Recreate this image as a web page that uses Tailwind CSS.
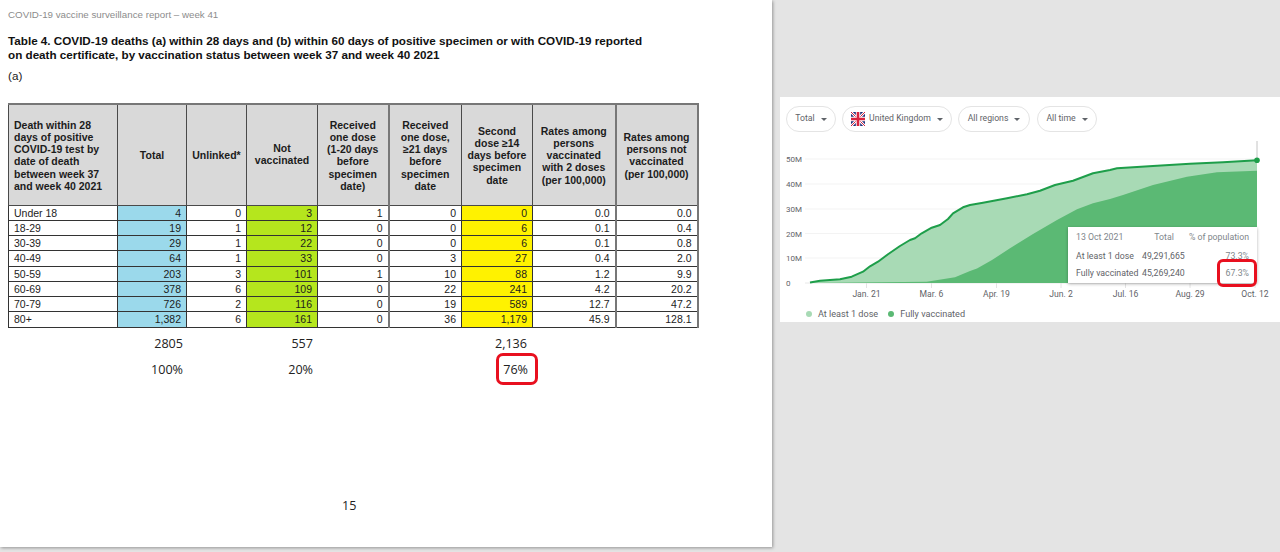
<!DOCTYPE html>
<html lang="en">
  <head>
    <meta charset="UTF-8" />
    <title>COVID-19 vaccine surveillance</title>
    <script src="https://cdn.jsdelivr.net/npm/@tailwindcss/browser@4"></script>
  </head>
  <body class="bg-[#e4e4e4] h-[552px] w-[1280px] overflow-hidden font-['Liberation_Sans',sans-serif]">
    <div class="flex items-start">
      <!-- report page -->
      <div class="w-[772px] h-[547px] shrink-0 bg-white shadow-[1px_1px_3px_rgba(0,0,0,0.35)] pl-[8px] relative">
        <div class="pt-[9px] text-[9.75px] leading-[12px] text-[#8c8c8c]">COVID-19 vaccine surveillance report – week 41</div>
        <div class="mt-[13px] text-[11.68px] leading-[14px] font-bold text-[#111] w-[720px]">
          Table 4. COVID-19 deaths (a) within 28 days and (b) within 60 days of positive specimen or with COVID-19 reported<br />on death certificate, by vaccination status between week 37 and week 40 2021
        </div>
        <div class="mt-[7px] text-[11.7px] leading-[14px] text-[#222]">(a)</div>

        <table class="mt-[20px] table-fixed border-collapse w-[689px] text-[10.5px] text-[#1c1c1c]">
          <colgroup>
            <col class="w-[109px]" /><col class="w-[69px]" /><col class="w-[60px]" /><col class="w-[71px]" /><col class="w-[71px] border-r-2 border-[#777]" /><col class="w-[73px]" /><col class="w-[71px]" /><col class="w-[83px] border-r-2 border-[#777]" /><col class="w-[82px] border-r-2 border-[#777]" />
          </colgroup>
          <thead>
            <tr class="h-[101px] bg-[#d9d9d9] font-bold leading-[12.25px] text-center border-t-2 border-[#777]">
              <th class="border border-[#4a4a4a] pl-[5px] pr-[4px] pt-[1px] text-left font-bold">Death within 28 days of positive COVID-19 test by date of death between week 37 and week 40 2021</th>
              <th class="border border-[#4a4a4a] font-bold">Total</th>
              <th class="border border-[#4a4a4a] font-bold">Unlinked*</th>
              <th class="border border-[#4a4a4a] px-[4px] pb-[2px] font-bold">Not vaccinated</th>
              <th class="border border-[#4a4a4a] px-[5px] pt-[1px] font-bold">Received one dose (1-20 days before specimen date)</th>
              <th class="border border-[#4a4a4a] px-[5px] pt-[1px] font-bold">Received one dose, ≥21 days before specimen date</th>
              <th class="border border-[#4a4a4a] px-[4px] pt-[1px] font-bold">Second dose ≥14 days before specimen date</th>
              <th class="border border-[#4a4a4a] px-[4px] pt-[1px] font-bold">Rates among persons vaccinated with 2 doses (per 100,000)</th>
              <th class="border border-[#4a4a4a] px-[4px] pt-[1px] font-bold">Rates among persons not vaccinated (per 100,000)</th>
            </tr>
          </thead>
          <tbody class="text-right leading-[14px]">
            <tr class="h-[15.25px]">
              <td class="border border-[#333] pl-[5px] text-left">Under 18</td><td class="border border-[#333] pr-[5px] bg-[#9bd9eb]">4</td><td class="border border-[#333] pr-[5px]">0</td><td class="border border-[#333] pr-[5px] bg-[#b5e61d]">3</td><td class="border border-[#333] pr-[5px]">1</td><td class="border border-[#333] pr-[5px]">0</td><td class="border border-[#333] pr-[5px] bg-[#fff200]">0</td><td class="border border-[#333] pr-[5px]">0.0</td><td class="border border-[#333] pr-[5px]">0.0</td>
            </tr>
            <tr class="h-[15.25px]">
              <td class="border border-[#333] pl-[5px] text-left">18-29</td><td class="border border-[#333] pr-[5px] bg-[#9bd9eb]">19</td><td class="border border-[#333] pr-[5px]">1</td><td class="border border-[#333] pr-[5px] bg-[#b5e61d]">12</td><td class="border border-[#333] pr-[5px]">0</td><td class="border border-[#333] pr-[5px]">0</td><td class="border border-[#333] pr-[5px] bg-[#fff200]">6</td><td class="border border-[#333] pr-[5px]">0.1</td><td class="border border-[#333] pr-[5px]">0.4</td>
            </tr>
            <tr class="h-[15.25px]">
              <td class="border border-[#333] pl-[5px] text-left">30-39</td><td class="border border-[#333] pr-[5px] bg-[#9bd9eb]">29</td><td class="border border-[#333] pr-[5px]">1</td><td class="border border-[#333] pr-[5px] bg-[#b5e61d]">22</td><td class="border border-[#333] pr-[5px]">0</td><td class="border border-[#333] pr-[5px]">0</td><td class="border border-[#333] pr-[5px] bg-[#fff200]">6</td><td class="border border-[#333] pr-[5px]">0.1</td><td class="border border-[#333] pr-[5px]">0.8</td>
            </tr>
            <tr class="h-[15.25px]">
              <td class="border border-[#333] pl-[5px] text-left">40-49</td><td class="border border-[#333] pr-[5px] bg-[#9bd9eb]">64</td><td class="border border-[#333] pr-[5px]">1</td><td class="border border-[#333] pr-[5px] bg-[#b5e61d]">33</td><td class="border border-[#333] pr-[5px]">0</td><td class="border border-[#333] pr-[5px]">3</td><td class="border border-[#333] pr-[5px] bg-[#fff200]">27</td><td class="border border-[#333] pr-[5px]">0.4</td><td class="border border-[#333] pr-[5px]">2.0</td>
            </tr>
            <tr class="h-[15.25px]">
              <td class="border border-[#333] pl-[5px] text-left">50-59</td><td class="border border-[#333] pr-[5px] bg-[#9bd9eb]">203</td><td class="border border-[#333] pr-[5px]">3</td><td class="border border-[#333] pr-[5px] bg-[#b5e61d]">101</td><td class="border border-[#333] pr-[5px]">1</td><td class="border border-[#333] pr-[5px]">10</td><td class="border border-[#333] pr-[5px] bg-[#fff200]">88</td><td class="border border-[#333] pr-[5px]">1.2</td><td class="border border-[#333] pr-[5px]">9.9</td>
            </tr>
            <tr class="h-[15.25px]">
              <td class="border border-[#333] pl-[5px] text-left">60-69</td><td class="border border-[#333] pr-[5px] bg-[#9bd9eb]">378</td><td class="border border-[#333] pr-[5px]">6</td><td class="border border-[#333] pr-[5px] bg-[#b5e61d]">109</td><td class="border border-[#333] pr-[5px]">0</td><td class="border border-[#333] pr-[5px]">22</td><td class="border border-[#333] pr-[5px] bg-[#fff200]">241</td><td class="border border-[#333] pr-[5px]">4.2</td><td class="border border-[#333] pr-[5px]">20.2</td>
            </tr>
            <tr class="h-[15.25px]">
              <td class="border border-[#333] pl-[5px] text-left">70-79</td><td class="border border-[#333] pr-[5px] bg-[#9bd9eb]">726</td><td class="border border-[#333] pr-[5px]">2</td><td class="border border-[#333] pr-[5px] bg-[#b5e61d]">116</td><td class="border border-[#333] pr-[5px]">0</td><td class="border border-[#333] pr-[5px]">19</td><td class="border border-[#333] pr-[5px] bg-[#fff200]">589</td><td class="border border-[#333] pr-[5px]">12.7</td><td class="border border-[#333] pr-[5px]">47.2</td>
            </tr>
            <tr class="h-[15.25px]">
              <td class="border border-[#333] pl-[5px] text-left">80+</td><td class="border border-[#333] pr-[5px] bg-[#9bd9eb]">1,382</td><td class="border border-[#333] pr-[5px]">6</td><td class="border border-[#333] pr-[5px] bg-[#b5e61d]">161</td><td class="border border-[#333] pr-[5px]">0</td><td class="border border-[#333] pr-[5px]">36</td><td class="border border-[#333] pr-[5px] bg-[#fff200]">1,179</td><td class="border border-[#333] pr-[5px]">45.9</td><td class="border border-[#333] pr-[5px]">128.1</td>
            </tr>
          </tbody>
        </table>

        <!-- hand-added totals, same column edges as the table -->
        <div class="mt-[7px] grid grid-cols-[109px_69px_60px_71px_71px_73px_71px] text-[12.6px] leading-[18px] text-[#222] font-['Open_Sans',sans-serif] text-right">
          <div></div><div class="pr-[3px]">2805</div><div></div><div class="pr-[4px]">557</div><div></div><div></div><div class="pr-[5px]">2,136</div>
        </div>
        <div class="mt-[8px] grid grid-cols-[109px_69px_60px_71px_71px_73px_71px] text-[12.6px] leading-[18px] text-[#222] font-['Open_Sans',sans-serif] text-right">
          <div></div><div class="pr-[3px]">100%</div><div></div><div class="pr-[4px]">20%</div><div></div><div></div><div class="pr-[4px]">76%</div>
        </div>
        <div class="absolute left-[496px] top-[353px] w-[42px] h-[32px] border-[3px] border-[#e8101f] rounded-[7px]"></div>

        <div class="absolute left-[342px] top-[498px] text-[12.6px] leading-[16px] text-[#222] font-['Open_Sans',sans-serif]">15</div>
      </div>

      <!-- vaccination chart, pasted in -->
      <div class="ml-[8px] mt-[97px] w-[500px] h-[225px] bg-white relative font-['Roboto',sans-serif]">
        <div class="pt-[9px] pl-[6px] flex gap-[6px] text-[8.7px] text-[#5f6368]">
          <div class="h-[26px] w-[50px] flex items-center justify-center gap-[6px] rounded-full border border-[#e4e4e4]">Total<span class="w-0 h-0 border-x-[3.5px] border-x-transparent border-t-[3.5px] border-t-[#5f6368]"></span></div>
          <div class="h-[26px] w-[110px] flex items-center justify-center gap-[6px] rounded-full border border-[#e4e4e4]">
            <span class="flex items-center gap-[4px]">
              <svg width="14" height="14" viewBox="0 0 14 14" class="shrink-0">
                <rect width="14" height="14" fill="#1f2f7a" />
                <path d="M0 0L14 14M14 0L0 14" stroke="#fff" stroke-width="2.6" />
                <path d="M0 0L14 14M14 0L0 14" stroke="#d8233f" stroke-width="1" />
                <path d="M7 0V14M0 7H14" stroke="#fff" stroke-width="4.4" />
                <path d="M7 0V14M0 7H14" stroke="#d8233f" stroke-width="2.6" />
              </svg>
              United Kingdom
            </span>
            <span class="w-0 h-0 border-x-[3.5px] border-x-transparent border-t-[3.5px] border-t-[#5f6368]"></span>
          </div>
          <div class="h-[26px] w-[72px] flex items-center justify-center gap-[6px] rounded-full border border-[#e4e4e4]">All regions<span class="w-0 h-0 border-x-[3.5px] border-x-transparent border-t-[3.5px] border-t-[#5f6368]"></span></div>
          <div class="h-[26px] w-[60px] ml-[1px] flex items-center justify-center gap-[6px] rounded-full border border-[#e4e4e4]">All time<span class="w-0 h-0 border-x-[3.5px] border-x-transparent border-t-[3.5px] border-t-[#5f6368]"></span></div>
        </div>

        <svg class="block mt-[3px]" width="500" height="168" viewBox="780 135 500 168" font-size="8.6" fill="#5f6368">
          <path d="M805 159H1257M805 184H1257M805 209H1257M805 233.5H1257M805 258H1257" stroke="#f3f3f3" stroke-width="1" />
          <path d="M805 283H1257" stroke="#e8e8e8" stroke-width="1" />
          <path d="M866.5 283V288M931.5 283V288M996.5 283V288M1061 283V288M1125.5 283V288M1190 283V288M1255 283V288" stroke="#e4e4e4" stroke-width="1" />
          <path d="M810 282.6L820 280.7 840 279.3 851.7 276.7 863 271.7 870 266.3 878 261.7 888 254.3 900 246 910 240 915 238.3 921.7 233.3 931.7 227.7 940 225 948 219 953 213.3 963 207.3 970 205 983 202.7 1007 198.3 1027 194.3 1040 190.7 1055 185 1073 180.7 1093 173.3 1110 170 1117 168.3 1153 166 1190 163.7 1223 162.3 1257 160.3V283H810Z" fill="#a8dab5" />
          <path d="M810 283L926.7 281.7 955 277.3 970 271 977 268.5 992 260 1010 248.3 1033 234 1057 220 1077 209.3 1093 203.3 1110 199 1123 195 1153 185 1187 176.7 1217 172.3 1257 170.7V283H810Z" fill="#5bb974" />
          <path d="M810 282.6L820 280.7 840 279.3 851.7 276.7 863 271.7 870 266.3 878 261.7 888 254.3 900 246 910 240 915 238.3 921.7 233.3 931.7 227.7 940 225 948 219 953 213.3 963 207.3 970 205 983 202.7 1007 198.3 1027 194.3 1040 190.7 1055 185 1073 180.7 1093 173.3 1110 170 1117 168.3 1153 166 1190 163.7 1223 162.3 1257 160.3" fill="none" stroke="#1e9e4a" stroke-width="2" stroke-linejoin="round" />
          <path d="M1257 141V160" stroke="#c4c4c4" stroke-width="1" />
          <circle cx="1257" cy="160.3" r="2.8" fill="#1e9e4a" />
          <g font-size="8">
            <text x="786" y="162">50M</text>
            <text x="786" y="187">40M</text>
            <text x="786" y="212">30M</text>
            <text x="786" y="236.5">20M</text>
            <text x="786" y="261">10M</text>
            <text x="786" y="286">0</text>
          </g>
          <g text-anchor="middle">
            <text x="866.5" y="297">Jan. 21</text>
            <text x="931.5" y="297">Mar. 6</text>
            <text x="996.5" y="297">Apr. 19</text>
            <text x="1061" y="297">Jun. 2</text>
            <text x="1125.5" y="297">Jul. 16</text>
            <text x="1190" y="297">Aug. 29</text>
            <text x="1255" y="297">Oct. 12</text>
          </g>
        </svg>

        <div class="mt-[5px] pl-[26px] flex items-center text-[9.1px] leading-[12px] text-[#5f6368]">
          <span class="w-[6px] h-[6px] rounded-full bg-[#a8dab5] mr-[6px]"></span>At least 1 dose
          <span class="w-[6px] h-[6px] rounded-full bg-[#5bb974] ml-[10px] mr-[6px]"></span>Fully vaccinated
        </div>

        <!-- hover card -->
        <div class="absolute left-[288px] top-[130px] w-[189px] h-[56px] bg-white shadow-[0_1px_3px_rgba(0,0,0,0.3)] px-[8px] text-[8.75px] text-[#5f6368]">
          <div class="flex items-center h-[21px] text-[#80868b]"><span>13 Oct 2021</span><span class="ml-[31px]">Total</span><span class="ml-auto">% of population</span></div>
          <div class="flex items-center h-[17px]"><span class="w-[66px]">At least 1 dose</span><span>49,291,665</span><span class="ml-auto text-[#80868b]">73.3%</span></div>
          <div class="flex items-center h-[17px]"><span class="w-[66px] whitespace-nowrap">Fully vaccinated</span><span>45,269,240</span><span class="ml-auto text-[#80868b]">67.3%</span></div>
        </div>
        <div class="absolute left-[437px] top-[162px] w-[40px] h-[28px] border-[3px] border-[#e8101f] rounded-[6px]"></div>
      </div>
    </div>
  </body>
</html>
